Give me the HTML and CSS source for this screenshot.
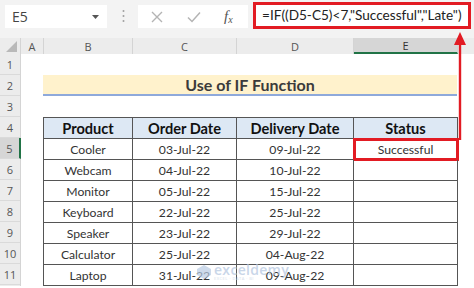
FILE: index.html
```html
<!DOCTYPE html>
<html>
<head>
<meta charset="utf-8">
<link rel="stylesheet" href="styles.css">
</head>
<body>
<div class="app">
  <div class="toolbar">
    <div class="namebox">
      <span class="name">E5</span>
      <svg class="caret" width="7" height="4" viewBox="0 0 7 4"><path d="M0 0h7L3.5 4z" fill="#555"/></svg>
    </div>
    <svg class="grip" width="3" height="14" viewBox="0 0 3 14"><circle cx="1.5" cy="2" r="1" fill="#a0a0a0"/><circle cx="1.5" cy="7" r="1" fill="#a0a0a0"/><circle cx="1.5" cy="12" r="1" fill="#a0a0a0"/></svg>
    <div class="fxbox">
      <svg class="ico-x" width="12" height="12" viewBox="0 0 12 12"><path d="M1 1L11 11M11 1L1 11" stroke="#b4b4b4" stroke-width="1.4"/></svg>
      <svg class="ico-check" width="14" height="12" viewBox="0 0 14 12"><path d="M1 6.5L5 10.5L13 1.5" stroke="#b4b4b4" stroke-width="1.5" fill="none"/></svg>
      <span class="fx">f<sub>x</sub></span>
    </div>
    <div class="formula">=IF((D5-C5)&lt;7,"Successful","Late")</div>
  </div>

  <div class="colheads">
    <div class="corner"><svg width="11" height="11" viewBox="0 0 11 11"><path d="M11 0V11H0z" fill="#b9b9b9"/></svg></div>
    <div class="ch cA">A</div>
    <div class="ch cB">B</div>
    <div class="ch cC">C</div>
    <div class="ch cD">D</div>
    <div class="ch cE active">E</div>
    <div class="ch cF"></div>
  </div>

  <div class="sheet">
    <div class="rowheads">
      <div class="rh">1</div>
      <div class="rh">2</div>
      <div class="rh">3</div>
      <div class="rh">4</div>
      <div class="rh active">5</div>
      <div class="rh">6</div>
      <div class="rh">7</div>
      <div class="rh">8</div>
      <div class="rh">9</div>
      <div class="rh">10</div>
      <div class="rh">11</div>
    </div>
    <div class="cells">
      <div class="blank"></div>
      <div class="titlerow"><div class="title">Use of IF Function</div></div>
      <div class="blank"></div>
      <div class="table">
        <div class="tr head"><div class="td">Product</div><div class="td">Order Date</div><div class="td">Delivery Date</div><div class="td">Status</div></div>
        <div class="tr"><div class="td">Cooler</div><div class="td">03-Jul-22</div><div class="td">09-Jul-22</div><div class="td sel">Successful</div></div>
        <div class="tr"><div class="td">Webcam</div><div class="td">04-Jul-22</div><div class="td">10-Jul-22</div><div class="td"></div></div>
        <div class="tr"><div class="td">Monitor</div><div class="td">05-Jul-22</div><div class="td">15-Jul-22</div><div class="td"></div></div>
        <div class="tr"><div class="td">Keyboard</div><div class="td">22-Jul-22</div><div class="td">25-Jul-22</div><div class="td"></div></div>
        <div class="tr"><div class="td">Speaker</div><div class="td">23-Jul-22</div><div class="td">29-Jul-22</div><div class="td"></div></div>
        <div class="tr"><div class="td">Calculator</div><div class="td">25-Jul-22</div><div class="td">04-Aug-22</div><div class="td"></div></div>
        <div class="tr"><div class="td">Laptop</div><div class="td">31-Jul-22</div><div class="td">09-Aug-22</div><div class="td"></div></div>
      </div>
    </div>
  </div>

  <svg class="arrow" width="14" height="108" viewBox="0 0 14 108"><path d="M7 0L13 13H8.2V108H5.8V13H1z" fill="#e21b23"/></svg>

  <div class="watermark">
    <svg width="16" height="16" viewBox="0 0 16 16"><path d="M8 1L15 5V11L8 15L1 11V5z" fill="#b8cbe3"/></svg>
    <div class="wm-text"><span class="wm-name">exceldemy</span><span class="wm-sub">EXCEL · DATA · BI</span></div>
  </div>
</div>
</body>
</html>
```

FILE: styles.css
```css
* { box-sizing: border-box; }
html, body { margin: 0; padding: 0; }
body { width: 474px; height: 288px; overflow: hidden; background: #fff; font-family: Lato, "Open Sans", sans-serif; }

.app { position: relative; width: 474px; height: 288px; }

.toolbar {
  height: 38px;
  background: #f3f3f3;
  display: flex;
  align-items: flex-start;
}
.namebox {
  margin: 5px 0 0 5px;
  width: 102px;
  height: 23px;
  background: #fff;
  display: flex;
  align-items: center;
  justify-content: space-between;
  padding: 0 8px 0 7px;
}
.name { font-family: "Open Sans", sans-serif; font-size: 14px; color: #444; }
.grip { margin: 9px 0 0 15px; }
.fxbox {
  margin: 5px 0 0 13px;
  width: 110px;
  height: 23px;
  background: #fff;
  display: flex;
  align-items: center;
  padding-left: 13px;
}
.ico-check { margin-left: 24px; }
.fx { margin-left: 23px; font-family: "Liberation Serif", serif; font-style: italic; font-size: 15px; color: #555; line-height: 1; }
.fx sub { font-size: 10px; vertical-align: -2px; }
.formula {
  margin: 2px 0 0 5px;
  width: 218px;
  height: 27px;
  background: #fff;
  border: 3px solid #e21b23;
  padding-left: 6px;
  font-family: Lato, sans-serif;
  font-size: 13.6px;
  color: #222;
  line-height: 21px;
  white-space: nowrap;
}

.colheads {
  height: 16px;
  display: flex;
  background: #ececec;
}
.corner { width: 21px; display: flex; align-items: flex-end; justify-content: flex-end; padding: 0 3px 2px 0; border-right: 1px solid #d4d4d4; }
.ch {
  font-size: 11px;
  color: #555;
  display: flex;
  align-items: center;
  justify-content: center;
  border-right: 1px solid #d4d4d4;
  font-family: "Open Sans", sans-serif;
}
.cA { width: 23px; }
.cB { width: 89px; }
.cC { width: 104px; }
.cD { width: 117px; }
.cE { width: 104px; }
.cF { flex: 1; border-right: none; }
.ch.active { background: #d6d6d6; border-bottom: 2px solid #217346; color: #333; }

.sheet { display: flex; }
.rowheads { width: 21px; background: #ececec; border-right: 1px solid #d4d4d4; }
.rh {
  height: 21px;
  font-family: "Open Sans", sans-serif;
  font-size: 11px;
  color: #555;
  display: flex;
  align-items: center;
  justify-content: center;
  border-bottom: 1px solid #dadada;
}
.rh.active { background: #d6d6d6; border-right: 2px solid #217346; margin-right: -1px; }

.cells { flex: 1; padding-left: 22px; }
.blank { height: 21px; }
.titlerow { height: 21px; }
.title {
  width: 414px;
  height: 21px;
  background: #fff2cc;
  border-bottom: 2px solid #8ea9db;
  text-align: center;
  font-weight: 700;
  font-size: 16px;
  line-height: 19px;
  color: #3b3b3b;
}

.table { width: 415px; border-left: 1px solid #555; border-top: 1px solid #555; }
.tr { display: grid; grid-template-columns: 89px 104px 117px 104px; height: 21px; }
.td {
  border-right: 1px solid #555;
  border-bottom: 1px solid #555;
  display: flex;
  align-items: center;
  justify-content: center;
  font-size: 12.2px;
  color: #333;
}
.tr.head .td { background: #dde8f4; font-weight: 700; font-size: 14.6px; color: #111; }
.td.sel { outline: 3px solid #e21b23; outline-offset: -2px; }

.arrow { position: absolute; left: 453px; top: 32px; }

.watermark {
  position: absolute;
  left: 196px;
  top: 263px;
  display: flex;
  align-items: center;
  gap: 2px;
  opacity: 0.7;
}
.wm-text { display: flex; flex-direction: column; line-height: 1; }
.wm-name { font-family: "Open Sans", sans-serif; font-size: 14px; font-weight: 600; color: #b3c6df; letter-spacing: 0.3px; }
.wm-sub { font-family: "Open Sans", sans-serif; font-size: 4px; color: #c4d2e4; letter-spacing: 0.5px; }
```
